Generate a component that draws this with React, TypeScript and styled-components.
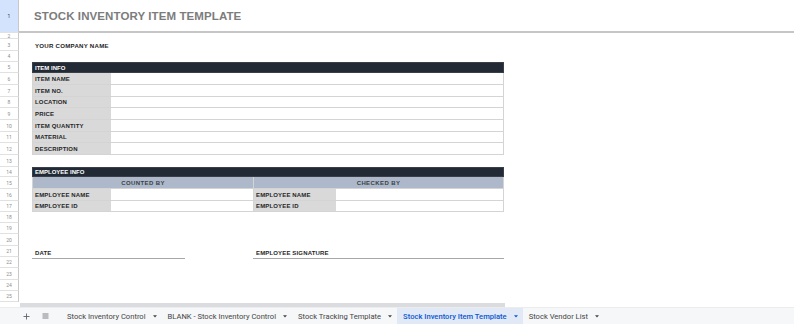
import React from "react";
import styled, { createGlobalStyle } from "styled-components";

const Global = createGlobalStyle`
  html, body { margin: 0; padding: 0; background: #fff; }
  body { width: 794px; height: 324px; overflow: hidden; font-family: "Liberation Sans", Arial, sans-serif; }
`;

const Page = styled.div`
  width: 794px;
  height: 324px;
  display: flex;
  flex-direction: column;
  overflow: hidden;
`;

const Sheet = styled.div`
  display: flex;
  flex-direction: column;
  height: 302px;
`;

const SheetRow = styled.div<{ $h: number }>`
  display: flex;
  height: ${(p) => p.$h}px;
  flex: none;
`;

const RowNum = styled.div<{ $active?: boolean }>`
  width: 19px;
  flex: none;
  box-sizing: border-box;
  border-right: 1px solid #c8c8c8;
  border-bottom: 1px solid #e1e1e1;
  background: ${(p) => (p.$active ? "#d3e3fd" : "#fff")};
  color: ${(p) => (p.$active ? "#333" : "#8c8c8c")};
  font-family: "Roboto", "Liberation Sans", sans-serif;
  font-size: 5px;
  display: flex;
  align-items: center;
  justify-content: center;
`;

const Content = styled.div<{ $rule?: boolean }>`
  flex: 1;
  display: flex;
  align-items: stretch;
  padding-left: 13px;
  box-sizing: border-box;
  border-bottom: ${(p) => (p.$rule ? "2px solid #c6c6c6" : "none")};
`;

const Title = styled.div`
  align-self: center;
  padding-left: 2px;
  font-size: 11.5px;
  font-weight: 700;
  color: #7c7c7c;
  letter-spacing: 0.1px;
  margin-top: 1px;
`;

const SmallText = styled.div`
  align-self: center;
  padding-left: 3px;
  font-size: 6.1px;
  font-weight: 700;
  letter-spacing: 0.25px;
  color: #1e1e1e;
`;

const Table = styled.div`
  width: 472px;
  display: flex;
  box-sizing: border-box;
`;

const DarkHead = styled(Table)`
  background: #222a35;
  border: 1px solid #3a3f47;
  color: #fff;
  font-size: 6px;
  font-weight: 700;
  align-items: center;
  padding-left: 2px;
`;

const Cell = styled.div<{ $w?: number; $label?: boolean; $band?: boolean; $last?: boolean }>`
  ${(p) => (p.$w ? `width: ${p.$w}px; flex: none;` : "flex: 1;")}
  box-sizing: border-box;
  display: flex;
  align-items: center;
  justify-content: ${(p) => (p.$band ? "center" : "flex-start")};
  padding-left: ${(p) => (p.$band ? 0 : 2)}px;
  background: ${(p) => (p.$band ? "#adb9ca" : p.$label ? "#d9d9d9" : "#fff")};
  border-bottom: 1px solid #d4d4d4;
  border-left: ${(p) => (p.$label || p.$band ? "1px solid #d4d4d4" : "none")};
  border-right: ${(p) => (p.$last ? "1px solid #d4d4d4" : "none")};
  font-size: 6px;
  font-weight: 700;
  letter-spacing: ${(p) => (p.$band ? "0.4px" : "0.15px")};
  color: ${(p) => (p.$band ? "#3a3f47" : "#262626")};
`;

const SignLine = styled.div<{ $w: number; $gap?: number }>`
  width: ${(p) => p.$w}px;
  margin-left: ${(p) => p.$gap ?? 0}px;
  margin-bottom: -2px;
  flex: none;
  box-sizing: border-box;
  border-bottom: 1px solid #a8a8a8;
  display: flex;
  align-items: flex-end;
  padding: 0 0 2px 3px;
  font-size: 6px;
  font-weight: 700;
  letter-spacing: 0.15px;
  color: #262626;
`;

const ScrollArea = styled.div`
  height: 6px;
  flex: none;
  display: flex;
  align-items: center;
  padding-left: 20px;
  background: #fff;
  border-bottom: 1px solid #ececec;
  box-sizing: border-box;
`;

const Thumb = styled.div`
  width: 485px;
  height: 4px;
  background: #dadcdf;
`;

const TabBar = styled.div`
  flex: 1;
  display: flex;
  align-items: stretch;
  background: #f6f7f8;
  font-family: "Roboto", "Liberation Sans", sans-serif;
  font-size: 7.6px;
  color: #454545;
  padding-left: 21px;
`;

const IconBtn = styled.div`
  width: 10px;
  display: flex;
  align-items: center;
  justify-content: center;
  margin-right: 9px;
  color: #5f6368;
`;

const Tab = styled.div<{ $active?: boolean }>`
  display: flex;
  align-items: center;
  gap: 7px;
  padding: 0 5px 0 6px;
  background: ${(p) => (p.$active ? "#e1e9f7" : "transparent")};
  color: ${(p) => (p.$active ? "#0b57d0" : "#454545")};
  font-weight: ${(p) => (p.$active ? 500 : 400)};
  white-space: nowrap;
`;

const Tabs = styled.div`
  display: flex;
  margin-left: 2px;
`;

const Caret = () => (
  <svg width="4" height="3" viewBox="0 0 4 3">
    <path d="M0 0.3h4L2 2.6z" fill="currentColor" />
  </svg>
);

const heights = [33, 6, 12, 11, 11, 12, 12, 11, 12, 12, 11, 12, 12, 10, 12, 12, 11, 11, 11, 12, 11, 11, 12, 11, 11];

const itemLabels = ["ITEM NAME", "ITEM NO.", "LOCATION", "PRICE", "ITEM QUANTITY", "MATERIAL", "DESCRIPTION"];

function rowContent(n: number): React.ReactNode {
  if (n === 1) return <Title>STOCK INVENTORY ITEM TEMPLATE</Title>;
  if (n === 3) return <SmallText>YOUR COMPANY NAME</SmallText>;
  if (n === 5) return <DarkHead>ITEM INFO</DarkHead>;
  if (n >= 6 && n <= 12)
    return (
      <Table>
        <Cell $w={79} $label>{itemLabels[n - 6]}</Cell>
        <Cell $last />
      </Table>
    );
  if (n === 14) return <DarkHead>EMPLOYEE INFO</DarkHead>;
  if (n === 15)
    return (
      <Table>
        <Cell $w={221} $band>COUNTED BY</Cell>
        <Cell $band $last>CHECKED BY</Cell>
      </Table>
    );
  if (n === 16 || n === 17) {
    const l = n === 16 ? "EMPLOYEE NAME" : "EMPLOYEE ID";
    return (
      <Table>
        <Cell $w={79} $label>{l}</Cell>
        <Cell $w={142} />
        <Cell $w={83} $label>{l}</Cell>
        <Cell $last />
      </Table>
    );
  }
  if (n === 21)
    return (
      <>
        <SignLine $w={153}>DATE</SignLine>
        <SignLine $w={251} $gap={68}>EMPLOYEE SIGNATURE</SignLine>
      </>
    );
  return null;
}

export default function App() {
  return (
    <Page>
      <Global />
      <Sheet>
        {heights.map((h, i) => {
          const n = i + 1;
          return (
            <SheetRow key={n} $h={h}>
              <RowNum $active={n === 1}>{n}</RowNum>
              <Content $rule={n === 1}>{rowContent(n)}</Content>
            </SheetRow>
          );
        })}
      </Sheet>
      <ScrollArea>
        <Thumb />
      </ScrollArea>
      <TabBar>
        <IconBtn>
          <svg width="7" height="7" viewBox="0 0 7 7">
            <path d="M3.5 0.5v6M0.5 3.5h6" stroke="currentColor" strokeWidth="0.9" fill="none" />
          </svg>
        </IconBtn>
        <IconBtn>
          <svg width="7" height="6" viewBox="0 0 7 6">
            <path d="M0.5 1h6M0.5 3h6M0.5 5h6" stroke="currentColor" strokeWidth="0.8" fill="none" />
          </svg>
        </IconBtn>
        <Tabs>
          <Tab>Stock Inventory Control<Caret /></Tab>
          <Tab>BLANK - Stock Inventory Control<Caret /></Tab>
          <Tab>Stock Tracking Template<Caret /></Tab>
          <Tab $active>Stock Inventory Item Template<Caret /></Tab>
          <Tab>Stock Vendor List<Caret /></Tab>
        </Tabs>
      </TabBar>
    </Page>
  );
}
